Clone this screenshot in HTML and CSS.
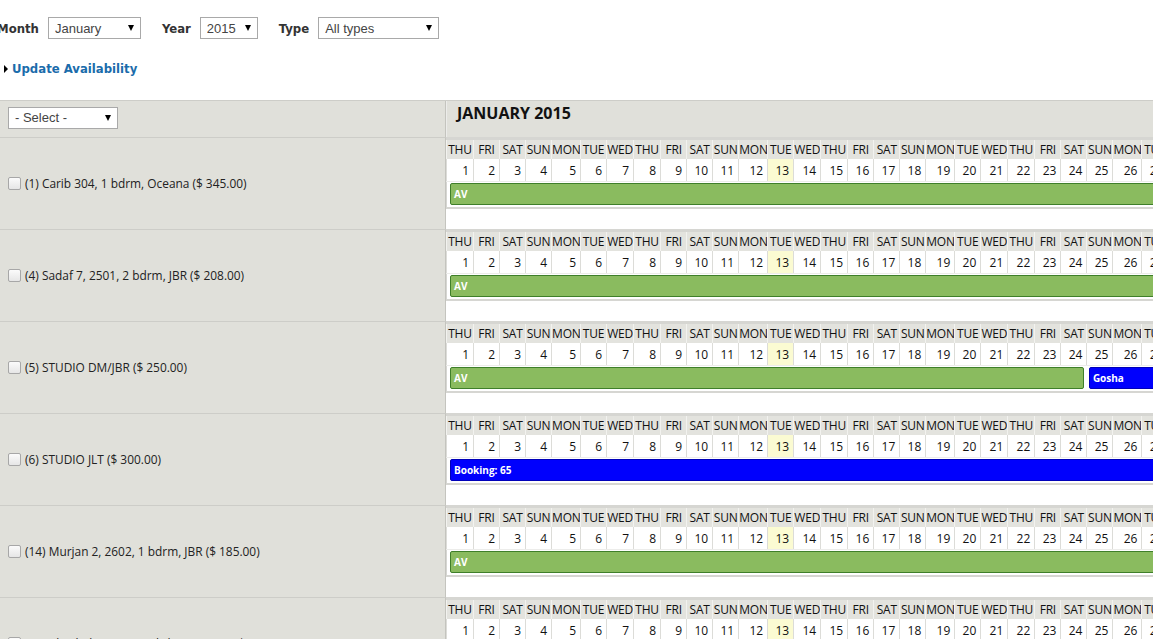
FILE: index.html
```html
<!DOCTYPE html>
<html>
<head>
<meta charset="utf-8">
<title>Availability</title>
<link rel="stylesheet" href="styles.css">
</head>
<body>
<div class="toolbar">
  <div class="filters">
    <label class="field"><span class="flabel">Month</span><span class="sel w-month"><select><option>January</option></select></span></label>
    <label class="field"><span class="flabel">Year</span><span class="sel w-year"><select><option>2015</option></select></span></label>
    <label class="field"><span class="flabel">Type</span><span class="sel w-type"><select><option>All types</option></select></span></label>
  </div>
  <a class="update" href="#"><span class="tri"></span>Update Availability</a>
</div>

<div class="board" id="board">
  <div class="lhead"><span class="sel w-select"><select><option>- Select -</option></select></span></div>
  <div class="rhead">JANUARY 2015</div>
</div>

<script src="script.js"></script>
</body>
</html>
```

FILE: styles.css
```css
html, body { margin: 0; padding: 0; background: #fff; overflow: hidden; }
body { font-family: "Open Sans", "Liberation Sans", sans-serif; color: #222; width: 1153px; height: 639px; }

.toolbar { height: 100px; box-sizing: border-box; padding-top: 17px; }
.filters { display: flex; align-items: center; margin-left: -3px; }
.field { display: flex; align-items: center; gap: 9px; margin-right: 21px; }
.flabel { font-family: "DejaVu Sans Condensed", "Liberation Sans", sans-serif; font-weight: bold; font-size: 13px; color: #333; }

.sel { position: relative; display: inline-flex; height: 22px; }
.sel select {
  -webkit-appearance: none; appearance: none; display: block;
  width: 100%; height: 22px; box-sizing: border-box;
  border: 1px solid #a9a9a9; border-radius: 0; background: #fff;
  font-family: "Liberation Sans", Arial, sans-serif; font-size: 13px; color: #444;
  padding: 0 0 0 6px; margin: 0; outline: none;
}
.sel::after {
  content: ""; position: absolute; right: 7px; top: 8px;
  border-left: 3.5px solid transparent; border-right: 3.5px solid transparent; border-top: 6px solid #000;
  pointer-events: none;
}
.w-month { width: 93px; }
.w-year { width: 58px; }
.w-type { width: 121px; }
.w-select { width: 110px; }

.update { display: flex; align-items: center; margin-top: 22px; margin-left: 4px; text-decoration: none;
  font-family: "DejaVu Sans Condensed", "Liberation Sans", sans-serif; font-weight: bold; font-size: 13px; color: #1b6cab; }
.tri { width: 0; height: 0; border-top: 4px solid transparent; border-bottom: 4px solid transparent; border-left: 4px solid #000; margin-right: 4px; }

.board { display: grid; grid-template-columns: 446px 707px; grid-auto-rows: 92px; grid-template-rows: 36px; border-top: 1px solid #cdcdc8; }
.lhead, .lcell { background: #e0e0da; border-right: 1px solid #c4c4be; }
.lhead { display: flex; align-items: center; padding-left: 8px; padding-bottom: 3px; }
.rhead { background: #e0e0da; border-left: 1px solid #ececea; padding-left: 10px; display: flex; align-items: center;
  font-family: "Open Sans", sans-serif; font-weight: bold; font-size: 16px; color: #111; padding-bottom: 12px; }
.lcell { border-top: 1px solid #cdcdc8; display: flex; align-items: center; padding-left: 8px; gap: 4px; padding-bottom: 1px;
  font-family: "Open Sans", sans-serif; font-size: 11.9px; color: #222; }
.chk { -webkit-appearance: none; appearance: none; margin: 0; width: 13px; height: 13px; box-sizing: border-box;
  border: 1px solid #a7a7a7; border-radius: 2px; background: linear-gradient(#fbfbfb, #e6e6e6); }
.rcell { overflow: hidden; background: #fff; }

.cal { width: 828px; border-collapse: collapse; table-layout: fixed; border-top: 3px solid #d6d6d2; border-bottom: 2px solid #d6d6d2; border-left: 1px solid #d6d6d2;
  font-family: "Open Sans", sans-serif; font-size: 12px; color: #111; }
.cal th { height: 19px; padding: 0; font-weight: normal; background: #e3e3de; border-left: 1px solid #f2f2ef; text-align: center; white-space: nowrap; overflow: hidden; letter-spacing: -0.2px; }
.cal td.dt { height: 22px; padding: 0 4px 0 0; text-align: right; border-left: 1px solid #dcdcd8; border-bottom: 1px solid #ececea; }
.cal td.today { background: #fbfbd2; }
.cal td.bc { height: 24px; padding: 0 3px 1px 3px; }
.cal td.bc.next { padding-left: 2px; }
.bar { height: 22px; box-sizing: border-box; border-radius: 2px; color: #fff; font-size: 10px; font-weight: bold; display: flex; align-items: center; padding-left: 3px; white-space: nowrap; }
.bar.av { background: #8abb5f; border: 1px solid #3f7f2a; }
.bar.bk { background: #0000fd; border: 1px solid #0000b8; }
.c-thu { width: 27px; }
.c-fri, .c-sat, .c-sun, .c-tue { width: 26px; }
.c-mon { width: 29px; }
.c-wed { width: 27px; }
```

FILE: script.js
```js
(function () {
  var names = ['THU', 'FRI', 'SAT', 'SUN', 'MON', 'TUE', 'WED'];
  var items = [
    { label: '(1) Carib 304, 1 bdrm, Oceana ($ 345.00)', bars: [{ t: 'AV', c: 'av', span: 31 }] },
    { label: '(4) Sadaf 7, 2501, 2 bdrm, JBR ($ 208.00)', bars: [{ t: 'AV', c: 'av', span: 31 }] },
    { label: '(5) STUDIO DM/JBR ($ 250.00)', bars: [{ t: 'AV', c: 'av', span: 24 }, { t: 'Gosha', c: 'bk', span: 7 }] },
    { label: '(6) STUDIO JLT ($ 300.00)', bars: [{ t: 'Booking: 65', c: 'bk', span: 31 }] },
    { label: '(14) Murjan 2, 2602, 1 bdrm, JBR ($ 185.00)', bars: [{ t: 'AV', c: 'av', span: 31 }] },
    { label: '(15) Al Sahab 2, 1105, 1 bdrm, Marina ($ 210.00)', bars: [{ t: 'AV', c: 'av', span: 31 }] }
  ];
  var board = document.getElementById('board');
  items.forEach(function (it) {
    var l = document.createElement('div');
    l.className = 'lcell';
    l.innerHTML = '<input type="checkbox" class="chk"><span>' + it.label.replace(/\$/g, '&#36;') + '</span>';
    board.appendChild(l);
    var r = document.createElement('div');
    r.className = 'rcell';
    var h = '<table class="cal"><colgroup>';
    var i;
    for (i = 0; i < 31; i++) h += '<col class="c-' + names[i % 7].toLowerCase() + '">';
    h += '</colgroup><tr>';
    for (i = 0; i < 31; i++) h += '<th>' + names[i % 7] + '</th>';
    h += '</tr><tr>';
    for (i = 1; i <= 31; i++) h += '<td class="dt' + (i === 13 ? ' today' : '') + '">' + i + '</td>';
    h += '</tr><tr>';
    it.bars.forEach(function (b, k) {
      h += '<td class="bc' + (k ? ' next' : '') + '" colspan="' + b.span + '"><div class="bar ' + b.c + '">' + b.t + '</div></td>';
    });
    h += '</tr></table>';
    r.innerHTML = h;
    board.appendChild(r);
  });
})();
```
